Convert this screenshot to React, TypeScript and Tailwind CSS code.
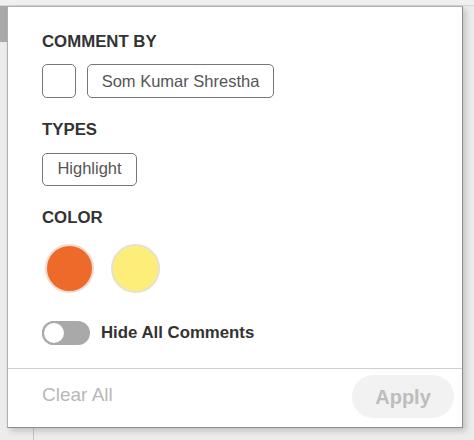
import React from "react";

export default function App() {
  return (
    <div
      className="relative w-[474px] h-[440px] overflow-hidden bg-[#ececec]"
      style={{ fontFamily: '"Liberation Sans", Arial, sans-serif' }}
    >
      {/* background content behind popover */}
      <div className="absolute left-0 top-0 w-[8px] h-[42px] bg-[#a9a9a9]" />
      <div className="absolute left-[33px] top-0 w-px h-[440px] bg-[#c4c4c4]" />
      <div className="absolute left-0 top-0 w-[474px] h-[6px] bg-[#f0f0f0] border-b border-[#d6d6d6]" />

      {/* popover panel */}
      <div className="absolute left-[7px] top-[6px] w-[456px] h-[422px] bg-white border border-[#b0b0b0] border-r-[#8e8e8e] border-b-[#8e8e8e] shadow-[3px_3px_6px_rgba(0,0,0,0.18)] flex flex-col">
        <div className="flex flex-col pl-[34px] pt-[26px]">
          <div className="text-[16.8px] leading-[18px] font-bold text-[#333333]">COMMENT BY</div>
          <div className="flex gap-[11px] mt-[13px]">
            <div className="w-[34px] h-[34px] rounded-[5px] border border-[#777777]" />
            <div className="h-[34px] w-[187px] rounded-[5px] border border-[#777777] flex items-center justify-center text-[16.5px] text-[#555555]">
              Som Kumar Shrestha
            </div>
          </div>

          <div className="mt-[23px] text-[16.8px] leading-[18px] font-bold text-[#333333]">TYPES</div>
          <div className="flex mt-[14px]">
            <div className="h-[33px] w-[95px] rounded-[5px] border border-[#777777] flex items-center justify-center text-[16.5px] text-[#555555] pb-[3px]">
              Highlight
            </div>
          </div>

          <div className="mt-[23px] text-[16.8px] leading-[18px] font-bold text-[#333333]">COLOR</div>
          <div className="flex gap-[17px] mt-[17px] pl-[3px]">
            <div className="w-[49px] h-[49px] rounded-full bg-[#ee6a2b] border-[2px] border-[#f3d9cc]" />
            <div className="w-[49px] h-[49px] rounded-full bg-[#fdee7a] border-[2px] border-[#e6e1cf]" />
          </div>

          <div className="flex items-center mt-[27px] gap-[11px]">
            <div className="relative w-[48px] h-[24px] rounded-full bg-[#a9a9a9]">
              <div className="absolute left-0 top-0 w-[24px] h-[24px] rounded-full bg-white border-[2px] border-[#a9a9a9]" />
            </div>
            <div className="text-[16.8px] font-bold text-[#333333]">Hide All Comments</div>
          </div>
        </div>

        <div className="mt-[23px] h-px bg-[#cfcfcf]" />

        <div className="flex items-center justify-between pl-[34px] pr-[8px] pt-[6px]">
          <div className="text-[19px] text-[#b8b8b8] pb-[2px]">Clear All</div>
          <div className="h-[43px] w-[102px] rounded-full bg-[#f2f2f2] flex items-center justify-center text-[20px] font-bold text-[#bdbdbd]">
            Apply
          </div>
        </div>
      </div>
    </div>
  );
}
